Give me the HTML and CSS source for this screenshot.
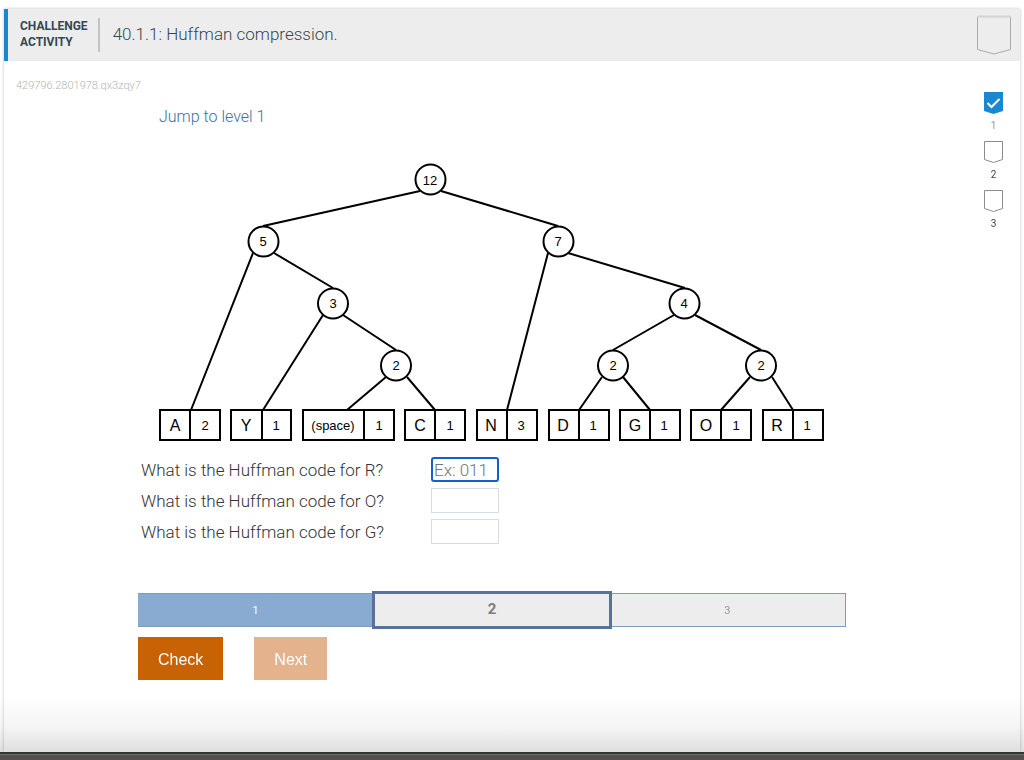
FILE: index.html
```html
<!DOCTYPE html>
<html lang="en">
<head>
  <meta charset="UTF-8">
  <meta name="viewport" content="width=device-width, initial-scale=1.0">
  <title>40.1.1: Huffman compression.</title>
  <link rel="stylesheet" href="styles.css">
</head>
<body>

<div class="card">
  <header class="card-header">
    <div class="kind">CHALLENGE<br>ACTIVITY</div>
    <h1 class="title">40.1.1: Huffman compression.</h1>
    <svg class="badge" width="36" height="40" viewBox="0 0 36 40">
      <path d="M1.5 1.5H34.5V34.5L18 39L1.5 34.5Z" fill="none" stroke="#aaa"/>
      <path d="M1 1.5H35" stroke="#d4d4d4" stroke-width="2"/>
    </svg>
  </header>

  <div class="content">
    <main class="activity">
      <div class="activity-id">429796.2801978.qx3zqy7</div>
      <a class="jump" href="#level1">Jump to level 1</a>

      <!-- Huffman tree -->
      <svg class="tree" viewBox="0 0 708 282" role="img" aria-label="Huffman tree">
        <g class="edges">
          <path d="M282 31L125 66M303 31L420 66"/>
          <path d="M115 93L53 250M136 93L195 128"/>
          <path d="M185 155L125 250M205 155L258 190"/>
          <path d="M248 217L209 250M269 217L297 250"/>
          <path d="M410 93L369 250M430 93L547 128"/>
          <path d="M536 155L475 190M557 155L623 190"/>
          <path d="M464 217L441 250M485 217L512 250"/>
          <path d="M612 217L583 250M634 217L655 250"/>
        </g>
        <g class="nodes">
          <circle cx="292.5" cy="19.5" r="15"/>
          <circle cx="125.5" cy="81.5" r="15"/>
          <circle cx="195" cy="143.5" r="15"/>
          <circle cx="258" cy="205.5" r="15"/>
          <circle cx="420.5" cy="81.5" r="15"/>
          <circle cx="546.5" cy="143.5" r="15"/>
          <circle cx="475" cy="205.5" r="15"/>
          <circle cx="623" cy="205.5" r="15"/>
          <path d="M22 250h60v30h-60zM52 250v30"/>
          <path d="M93 250h60v30h-60zM124 250v30"/>
          <path d="M165 250h91v30h-91zM226 250v30"/>
          <path d="M267 250h60v30h-60zM297 250v30"/>
          <path d="M339 250h60v30h-60zM369 250v30"/>
          <path d="M411 250h60v30h-60zM441 250v30"/>
          <path d="M482 250h60v30h-60zM512 250v30"/>
          <path d="M553 250h60v30h-60zM583 250v30"/>
          <path d="M625 250h60v30h-60zM655 250v30"/>
        </g>
        <g class="counts">
          <text x="292" y="25">12</text>
          <text x="125" y="86">5</text>
          <text x="195" y="148">3</text>
          <text x="258" y="210">2</text>
          <text x="420" y="86">7</text>
          <text x="546" y="148">4</text>
          <text x="475" y="210">2</text>
          <text x="623" y="210">2</text>
          <text x="67" y="270">2</text>
          <text x="138" y="270">1</text>
          <text x="195" y="270">(space)</text>
          <text x="241" y="270">1</text>
          <text x="312" y="270">1</text>
          <text x="383" y="270">3</text>
          <text x="455" y="270">1</text>
          <text x="526" y="270">1</text>
          <text x="598" y="270">1</text>
          <text x="669" y="270">1</text>
        </g>
        <g class="letters">
          <text x="37" y="271">A</text>
          <text x="108" y="271">Y</text>
          <text x="282" y="271">C</text>
          <text x="353" y="271">N</text>
          <text x="425" y="271">D</text>
          <text x="497" y="271">G</text>
          <text x="568" y="271">O</text>
          <text x="639" y="271">R</text>
        </g>
      </svg>

      <form class="questions">
        <label for="codeR">What is the Huffman code for R?</label>
        <input id="codeR" type="text" placeholder="Ex: 011" autofocus>
        <label for="codeO">What is the Huffman code for O?</label>
        <input id="codeO" type="text">
        <label for="codeG">What is the Huffman code for G?</label>
        <input id="codeG" type="text">
      </form>

      <div class="steps">
        <div class="step done">1</div>
        <div class="step current">2</div>
        <div class="step">3</div>
      </div>

      <div class="buttons">
        <button class="btn" type="button">Check</button>
        <button class="btn" type="button" disabled>Next</button>
      </div>
    </main>

    <aside class="levels">
      <div class="level first">
        <svg width="19" height="22" viewBox="0 0 19 22">
          <path d="M0 0H19V19L9.5 22L0 19Z" fill="#1a88d0"/>
          <path d="M3.5 11L7.5 15L15.5 7" fill="none" stroke="#fff" stroke-width="2"/>
        </svg>
        <span>1</span>
      </div>
      <div class="level">
        <svg width="19" height="22" viewBox="0 0 19 22">
          <path d="M.5 .5H18.5V18.5L9.5 21.5L.5 18.5Z" fill="#fff" stroke="#8c8c8c"/>
        </svg>
        <span>2</span>
      </div>
      <div class="level">
        <svg width="19" height="22" viewBox="0 0 19 22">
          <path d="M.5 .5H18.5V18.5L9.5 21.5L.5 18.5Z" fill="#fff" stroke="#8c8c8c"/>
        </svg>
        <span>3</span>
      </div>
    </aside>
  </div>
</div>

<footer class="bottom"></footer>

</body>
</html>
```
FILE: styles.css
```css
* {
  margin: 0;
  padding: 0;
  box-sizing: border-box;
}
body {
  display: flex;
  flex-direction: column;
  min-height: 100vh;
  padding-top: 9px;
  background: linear-gradient(to top, #dedede 8px, #f4f4f4 32px, #fff 64px);
  color: #37474f;
  font-family: Roboto, "Liberation Sans", sans-serif;
}
.card {
  flex: 1;
  margin: 0 4px;
  box-shadow: 0 0 3px rgba(0, 0, 0, 0.25);
  clip-path: inset(-4px -4px 0 -4px);
}
.card-header {
  display: flex;
  align-items: center;
  height: 52px;
  padding-right: 8px;
  background: #ededed;
  border-left: 4px solid #1a88d0;
}
.kind {
  padding: 0 10px 2px 12px;
  border-right: 2px solid #c3c3c3;
  font-size: 12px;
  font-weight: 700;
  line-height: 16px;
}
.title {
  flex: 1;
  padding: 0 0 2px 13px;
  font-size: 17px;
  font-weight: 300;
}
.content {
  display: flex;
  justify-content: space-between;
  padding: 16px 17px 16px 134px;
}
.activity {
  flex: 1;
  max-width: 708px;
}
.activity-id {
  margin-left: -122px;
  color: #b3b3b3;
  font-size: 11px;
  font-weight: 300;
  line-height: 18px;
}
.jump {
  display: block;
  margin: 12px 0 0 21px;
  color: #456f9f;
  font-size: 16px;
  font-weight: 300;
  line-height: 20px;
  text-decoration: none;
}
.tree {
  display: block;
  width: 100%;
  margin-top: 33px;
}
.edges path,
.nodes path,
.nodes circle {
  fill: none;
  stroke: #000;
  stroke-width: 2;
}
.nodes circle {
  fill: #fff;
}
.counts,
.letters {
  font-family: "Liberation Sans", Arial, sans-serif;
  font-size: 13px;
  text-anchor: middle;
}
.letters {
  font-size: 16px;
}
.questions {
  display: grid;
  grid-template-columns: 290px 68px;
  grid-auto-rows: 25px;
  row-gap: 6px;
  align-items: center;
  margin: 15px 0 0 3px;
}
.questions label {
  padding-top: 1px;
  color: #333;
  font-size: 17px;
  font-weight: 300;
  line-height: 25px;
}
.questions input {
  width: 100%;
  height: 25px;
  padding: 0 2px;
  border: 1px solid #d5dde3;
  font-family: inherit;
  font-size: 17px;
  font-weight: 300;
}
.questions input::placeholder {
  color: #757575;
}
.questions input:focus {
  border: 2px solid #1260cc;
  border-radius: 3px;
  padding: 0 1px;
  outline: none;
}
.steps {
  display: flex;
  margin-top: 49px;
}
.step {
  flex: 1;
  height: 34px;
  border: 1px solid #7d9cc0;
  border-left: none;
  background: #ededed;
  color: #999;
  font-size: 11px;
  line-height: 33px;
  text-align: center;
}
.step.done {
  background: #89abd2;
  color: #fff;
}
.step.current {
  position: relative;
  z-index: 1;
  outline: 3px solid #5b7199;
  outline-offset: -1px;
  border: none;
  color: #7d7d7d;
  font-size: 15px;
  font-weight: 700;
}
.buttons {
  display: flex;
  gap: 31px;
  margin-top: 10px;
}
.btn {
  height: 43px;
  padding: 2px 20px 0;
  border: none;
  background: #c86305;
  color: #fff;
  font-family: "Liberation Sans", Arial, sans-serif;
  font-size: 16px;
}
.btn:disabled {
  background: #e5b28e;
}
.levels {
  display: flex;
  flex-direction: column;
  gap: 8px;
  padding-top: 15px;
}
.level {
  display: flex;
  flex-direction: column;
  align-items: center;
  gap: 4px;
  font-size: 10px;
  line-height: 15px;
}
.level.first span {
  color: #8c979c;
}
.bottom {
  height: 8px;
  background: #555050;
  border-top: 2px solid #303634;
  box-shadow: inset 0 1px #70706e;
}
```
